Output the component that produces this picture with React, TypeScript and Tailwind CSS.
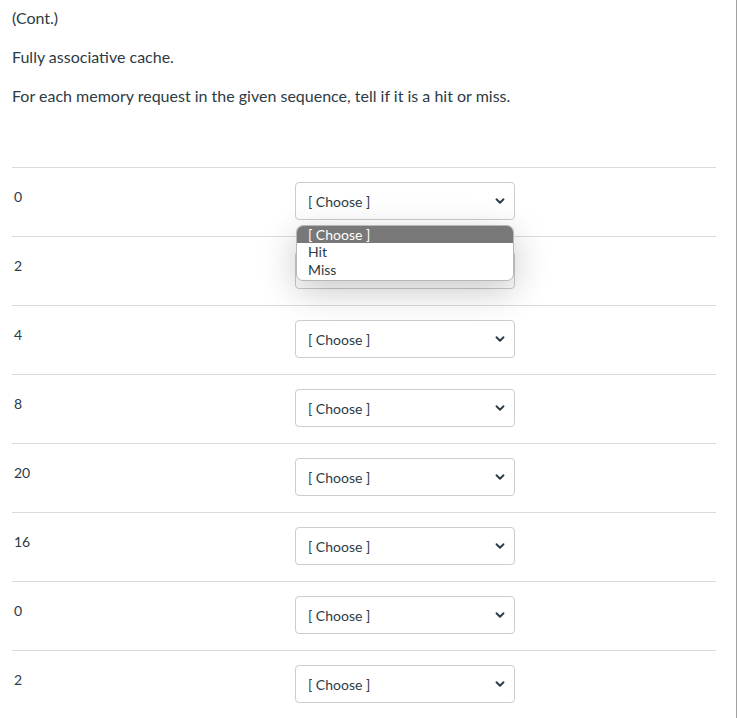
import { ChevronDown } from "lucide-react";

const requests = ["0", "2", "4", "8", "20", "16", "0", "2"];

function Select() {
  return (
    <div className="w-[220px] h-[38px] border border-[#c7cdd1] rounded-[4px] bg-white flex items-center justify-between pl-[12px] pr-[7px]">
      <span className="text-[14px] text-[#2d3b45]">[ Choose ]</span>
      <ChevronDown size={14} strokeWidth={3.2} className="text-[#2d3b45]" />
    </div>
  );
}

export default function App() {
  return (
    <main
      className="relative min-h-[718px] w-[737px] bg-white text-[#2d3b45] border-r border-[#a0a0a0]"
      style={{ fontFamily: "Lato, 'Open Sans', sans-serif" }}
    >
      <div className="w-[704px] ml-[12px] pt-[6px]">
        {/* Question text */}
        <div className="flex flex-col gap-[15px] text-[16px] leading-[24px]">
          <p>(Cont.)</p>
          <p>Fully associative cache.</p>
          <p>For each memory request in the given sequence, tell if it is a hit or miss.</p>
        </div>

        {/* Answer rows */}
        <div className="mt-[59px]">
          {requests.map((r, i) => (
            <div key={i} className="relative h-[69px] border-t border-[#dadada] flex">
              <div className="w-[283px] pl-[2px] pt-[20px] text-[14px] leading-[17px]">{r}</div>
              <div className="pt-[14px]">
                <Select />
              </div>

              {i === 0 && (
                <div className="absolute left-[284px] top-[57px] z-10 w-[218px] rounded-[7px] bg-white border border-[#b8b8b8] overflow-hidden shadow-[0_10px_36px_rgba(0,0,0,0.22)] text-[14px] leading-[17px]">
                  <div className="bg-[#787878] text-white pl-[11px] h-[17px]">[ Choose ]</div>
                  <div className="pl-[11px] h-[18px] text-[#2d3b45]">Hit</div>
                  <div className="pl-[11px] h-[19px] text-[#2d3b45]">Miss</div>
                </div>
              )}
            </div>
          ))}
        </div>
      </div>
    </main>
  );
}
